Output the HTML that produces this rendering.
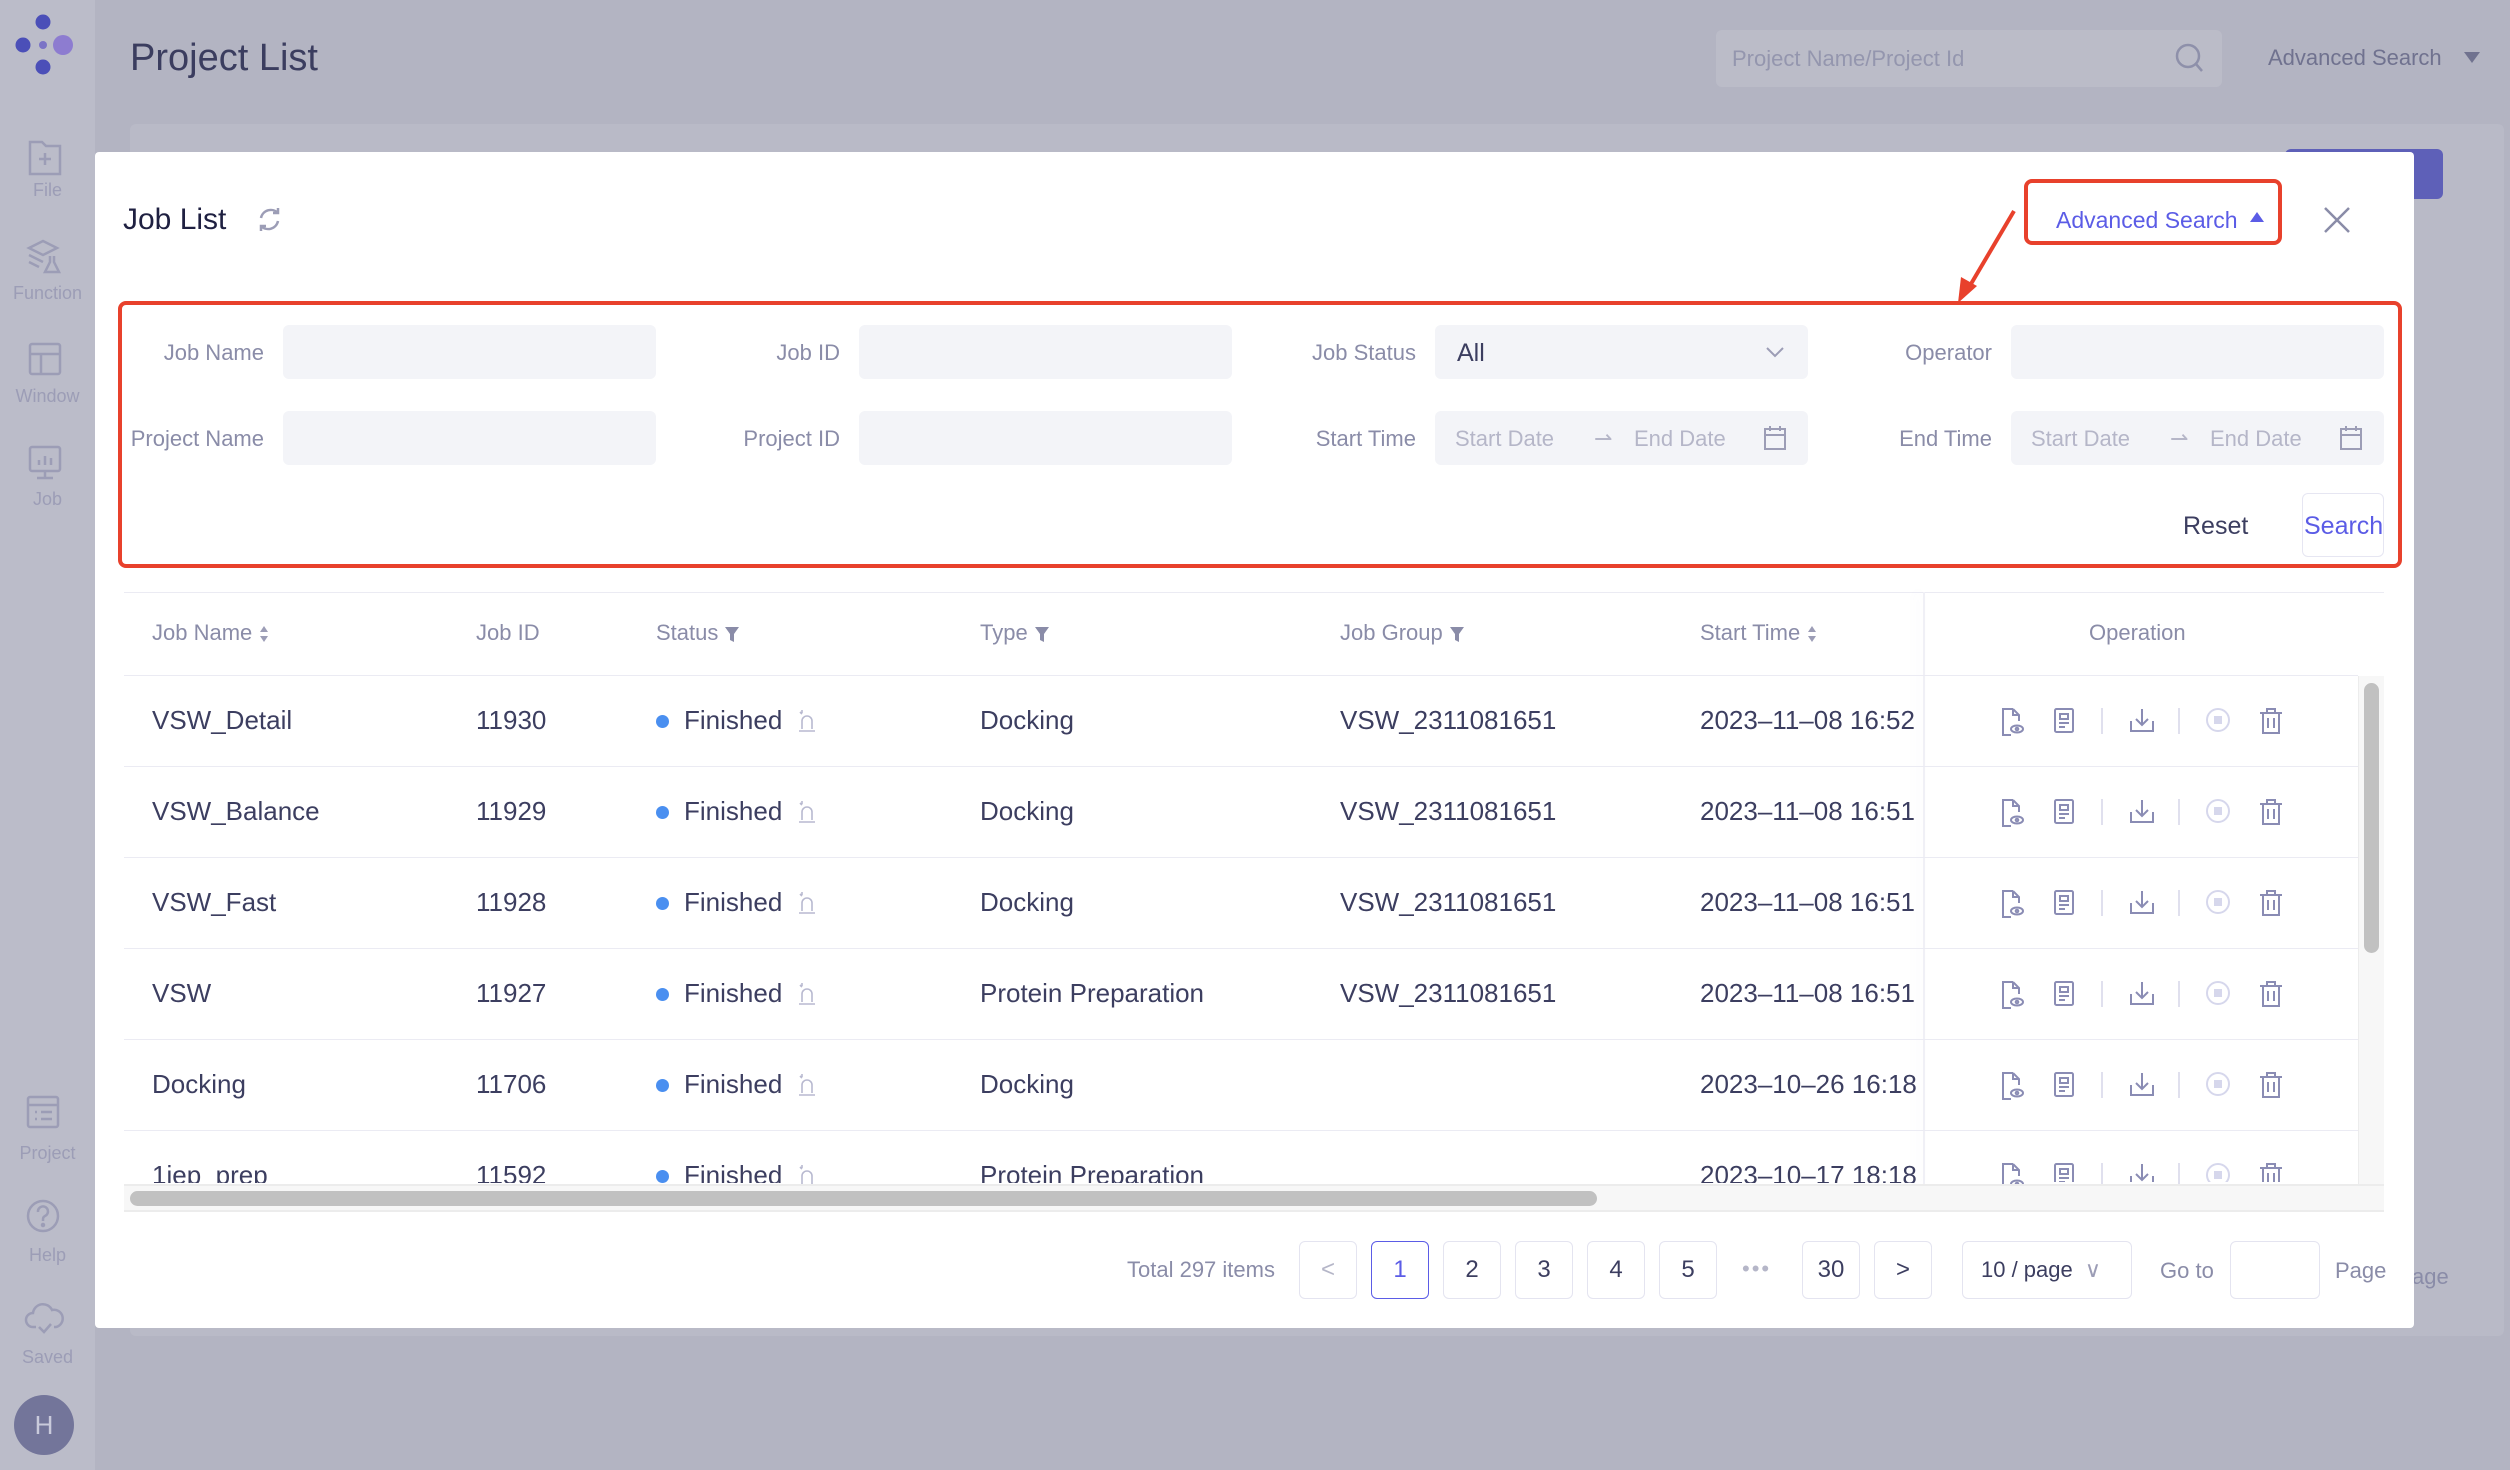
<!DOCTYPE html>
<html><head><meta charset="utf-8"><style>
*{margin:0;padding:0;box-sizing:border-box}
body{width:2510px;height:1470px;position:relative;overflow:hidden;background:#b3b4c2;font-family:"Liberation Sans",sans-serif}
.a{position:absolute}
.sb{left:0;top:0;width:95px;height:1470px;background:#bbbcc9}
.sl{width:95px;text-align:center;font-size:18px;color:#9c9db6}
.inp{background:#f3f4f8;border-radius:6px;height:54px}
.lbl{font-size:22px;color:#8a8ca8;text-align:right;width:200px}
.hd{font-size:22px;color:#8a8ca8;top:620px}
.c{font-size:26px;color:#3c3e60}
.pb{height:58px;border:1px solid #e4e4f0;border-radius:6px;top:1241px;font-size:24px;color:#3c3e60;text-align:center;line-height:56px;background:#fff}
.rl{height:1px;background:#ebebf3;left:124px;width:2234px}
.fl{display:inline-block;vertical-align:middle;margin-left:6px}
</style></head><body>
<div class="a sb"></div>
<svg class="a" style="left:0;top:0" width="95" height="90"><circle cx="43" cy="22" r="7.5" fill="#4b4fb8"/><circle cx="23" cy="45" r="7.5" fill="#4b4fb8"/><circle cx="43" cy="45" r="4" fill="#7a73c6"/><circle cx="63" cy="45" r="10" fill="#8d7cd0"/><circle cx="43" cy="67" r="7.5" fill="#4b4fb8"/></svg>
<svg class="a" style="left:28px;top:140px" width="36" height="36" fill="none" stroke="#9c9db6" stroke-width="2.5"><path d="M2 2h12l4 4h14v28H2z"/><path d="M17 13v12M11 19h12"/></svg>
<div class="a sl" style="top:180px">File</div>
<svg class="a" style="left:26px;top:238px" width="40" height="36" fill="none" stroke="#9c9db6" stroke-width="2.5"><path d="M3 10l14-7 14 7-14 7z"/><path d="M3 17l14 7M3 24l10 5"/><path d="M24 18v6l-5 10h14l-5-10v-6"/></svg>
<div class="a sl" style="top:283px">Function</div>
<svg class="a" style="left:28px;top:342px" width="36" height="36" fill="none" stroke="#9c9db6" stroke-width="2.5"><rect x="2" y="2" width="30" height="30" rx="2"/><path d="M2 12h30M13 12v20"/></svg>
<div class="a sl" style="top:386px">Window</div>
<svg class="a" style="left:28px;top:445px" width="36" height="36" fill="none" stroke="#9c9db6" stroke-width="2.5"><rect x="2" y="2" width="30" height="24" rx="2"/><path d="M17 26v6M9 33h16M11 20v-5M17 20v-9M23 20v-7"/></svg>
<div class="a sl" style="top:489px">Job</div>
<svg class="a" style="left:26px;top:1095px" width="40" height="36" fill="none" stroke="#9c9db6" stroke-width="2.5"><rect x="2" y="2" width="30" height="30" rx="2"/><path d="M2 10h30M9 17h2M15 17h11M9 24h2M15 24h11"/></svg>
<div class="a sl" style="top:1143px">Project</div>
<svg class="a" style="left:26px;top:1198px" width="40" height="40" fill="none" stroke="#9c9db6" stroke-width="2.5"><circle cx="17" cy="18" r="15"/><path d="M12 14a5 5 0 1 1 7 4c-2 1-2 2-2 5"/><circle cx="17" cy="27" r="1" fill="#9c9db6"/></svg>
<div class="a sl" style="top:1245px">Help</div>
<svg class="a" style="left:24px;top:1301px" width="44" height="36" fill="none" stroke="#9c9db6" stroke-width="2.5"><path d="M12 26H9a7 7 0 0 1 0-14 10 10 0 0 1 19-3 8 8 0 0 1 4 17h-2"/><path d="M15 26l5 5 7-8"/></svg>
<div class="a sl" style="top:1347px">Saved</div>
<div class="a" style="left:14px;top:1395px;width:60px;height:60px;border-radius:50%;background:#73759a;color:#c9cadb;font-size:26px;text-align:center;line-height:60px">H</div>
<div class="a" style="left:130px;top:37px;font-size:38px;color:#3b3d5f">Project List</div>
<div class="a" style="left:1716px;top:30px;width:506px;height:57px;background:#bbbcc8;border-radius:6px"></div>
<div class="a" style="left:1732px;top:46px;font-size:22px;color:#9496ae">Project Name/Project Id</div>
<svg class="a" style="left:2174px;top:42px" width="32" height="34" fill="none" stroke="#8e90aa" stroke-width="2.5"><circle cx="14" cy="14" r="11"/><path d="M22 22l6 7"/></svg>
<div class="a" style="left:2268px;top:45px;font-size:22px;color:#70728f">Advanced Search</div>
<div class="a" style="left:2464px;top:52px;width:0;height:0;border-left:8px solid transparent;border-right:8px solid transparent;border-top:11px solid #70728f"></div>
<div class="a" style="left:130px;top:124px;width:2374px;height:1212px;background:#b9bac7;border-radius:6px"></div>
<div class="a" style="left:2285px;top:149px;width:158px;height:50px;background:#5e60b8;border-radius:6px"></div>
<div class="a" style="left:2412px;top:1264px;font-size:22px;color:#8a8ca8">age</div>
<div class="a" style="left:95px;top:152px;width:2319px;height:1176px;background:#fff;border-radius:4px"></div>
<div class="a" style="left:123px;top:203px;font-size:30px;color:#1f2041">Job List</div>
<svg class="a" style="left:256px;top:205px" width="28" height="30" fill="none" stroke="#9c9db6" stroke-width="2.5"><path d="M22 8a10 10 0 0 0-17 5M5 21a10 10 0 0 0 17-5"/><path d="M22 3v5h-5M5 26v-5h5"/></svg>
<div class="a" style="left:2024px;top:179px;width:258px;height:66px;border:4px solid #e8412c;border-radius:8px"></div>
<div class="a" style="left:2056px;top:207px;font-size:23px;color:#5b5ce6">Advanced Search</div>
<div class="a" style="left:2250px;top:212px;width:0;height:0;border-left:7px solid transparent;border-right:7px solid transparent;border-bottom:10px solid #5b5ce6"></div>
<svg class="a" style="left:2322px;top:205px" width="30" height="30" stroke="#8a8ca8" stroke-width="2.5"><path d="M3 3l24 24M27 3L3 27"/></svg>
<svg class="a" style="left:1950px;top:205px" width="70" height="100"><path d="M64 6L18 84" stroke="#e8412c" stroke-width="4"/><path d="M8 98l3-26 16 9z" fill="#e8412c"/></svg>
<div class="a" style="left:118px;top:301px;width:2284px;height:267px;border:4px solid #e8412c;border-radius:8px"></div>
<div class="a lbl" style="left:64px;top:340px">Job Name</div>
<div class="a inp" style="left:283px;top:325px;width:373px"></div>
<div class="a lbl" style="left:640px;top:340px">Job ID</div>
<div class="a inp" style="left:859px;top:325px;width:373px"></div>
<div class="a lbl" style="left:1216px;top:340px">Job Status</div>
<div class="a inp" style="left:1435px;top:325px;width:373px"></div>
<div class="a" style="left:1457px;top:339px;font-size:25px;color:#3c3e60">All</div>
<svg class="a" style="left:1765px;top:345px" width="20" height="14" fill="none" stroke="#9c9db6" stroke-width="2"><path d="M2 3l8 8 8-8"/></svg>
<div class="a lbl" style="left:1792px;top:340px">Operator</div>
<div class="a inp" style="left:2011px;top:325px;width:373px"></div>
<div class="a lbl" style="left:64px;top:426px">Project Name</div>
<div class="a inp" style="left:283px;top:411px;width:373px"></div>
<div class="a lbl" style="left:640px;top:426px">Project ID</div>
<div class="a inp" style="left:859px;top:411px;width:373px"></div>
<div class="a lbl" style="left:1216px;top:426px">Start Time</div>
<div class="a inp" style="left:1435px;top:411px;width:373px"></div>
<div class="a lbl" style="left:1792px;top:426px">End Time</div>
<div class="a inp" style="left:2011px;top:411px;width:373px"></div>
<div class="a" style="left:1455px;top:426px;font-size:22px;color:#b5b6c8">Start Date</div>
<div class="a" style="left:1594px;top:426px;font-size:22px;color:#b5b6c8">⇀</div>
<div class="a" style="left:1634px;top:426px;font-size:22px;color:#b5b6c8">End Date</div>
<div class="a" style="left:2031px;top:426px;font-size:22px;color:#b5b6c8">Start Date</div>
<div class="a" style="left:2170px;top:426px;font-size:22px;color:#b5b6c8">⇀</div>
<div class="a" style="left:2210px;top:426px;font-size:22px;color:#b5b6c8">End Date</div>
<svg class="a" style="left:1763px;top:424px" width="24" height="28" fill="none" stroke="#9c9db6" stroke-width="2"><rect x="2" y="5" width="20" height="20"/><path d="M2 11h20M7 2v5M17 2v5"/></svg>
<svg class="a" style="left:2339px;top:424px" width="24" height="28" fill="none" stroke="#9c9db6" stroke-width="2"><rect x="2" y="5" width="20" height="20"/><path d="M2 11h20M7 2v5M17 2v5"/></svg>
<div class="a" style="left:2183px;top:512px;font-size:25px;color:#3c3e60">Reset</div>
<div class="a" style="left:2302px;top:493px;width:82px;height:64px;border:1px solid #e6e6f2;border-radius:6px"></div>
<div class="a" style="left:2304px;top:512px;font-size:25px;color:#5b5ce6">Search</div>
<div class="a rl" style="top:592px;width:2260px"></div>
<div class="a" style="left:1923px;top:592px;width:2px;height:592px;background:#f0f0f6;box-shadow:-6px 0 10px rgba(120,120,180,0.08)"></div>
<div class="a hd" style="left:152px">Job Name<svg class="fl" width="12" height="18"><path d="M6 1l4 6H2zM6 17l4-6H2z" fill="#9c9db6"/></svg></div>
<div class="a hd" style="left:476px">Job ID</div>
<div class="a hd" style="left:656px">Status<svg class="fl" width="16" height="18"><path d="M1 2h14l-5 7v8l-4-2V9z" fill="#8a8ca8"/></svg></div>
<div class="a hd" style="left:980px">Type<svg class="fl" width="16" height="18"><path d="M1 2h14l-5 7v8l-4-2V9z" fill="#8a8ca8"/></svg></div>
<div class="a hd" style="left:1340px">Job Group<svg class="fl" width="16" height="18"><path d="M1 2h14l-5 7v8l-4-2V9z" fill="#8a8ca8"/></svg></div>
<div class="a hd" style="left:1700px">Start Time<svg class="fl" width="12" height="18"><path d="M6 1l4 6H2zM6 17l4-6H2z" fill="#9c9db6"/></svg></div>
<div class="a hd" style="left:2089px">Operation</div>
<div class="a rl" style="top:675px"></div>
<div class="a rl" style="top:766px"></div>
<div class="a rl" style="top:857px"></div>
<div class="a rl" style="top:948px"></div>
<div class="a rl" style="top:1039px"></div>
<div class="a rl" style="top:1130px"></div>
<div id="rows"></div>
<div class="a" style="left:124px;top:1184px;width:2260px;height:28px;background:#f7f7f7;border-top:2px solid #ececec;border-bottom:2px solid #ececec"></div>
<div class="a" style="left:130px;top:1191px;width:1467px;height:15px;background:#c1c1c1;border-radius:8px"></div>
<div class="a" style="left:2358px;top:676px;width:26px;height:508px;background:#f7f7f7;border-left:1px solid #ececec"></div>
<div class="a" style="left:2364px;top:683px;width:15px;height:270px;background:#c1c1c1;border-radius:8px"></div>
<div class="a" style="left:1127px;top:1257px;font-size:22px;color:#8a8ca8">Total 297 items</div>
<div class="a pb" style="left:1299px;width:58px;color:#b5b6c8">&lt;</div>
<div class="a pb" style="left:1371px;width:58px;border-color:#5b5ce6;color:#5b5ce6">1</div>
<div class="a pb" style="left:1443px;width:58px">2</div>
<div class="a pb" style="left:1515px;width:58px">3</div>
<div class="a pb" style="left:1587px;width:58px">4</div>
<div class="a pb" style="left:1659px;width:58px">5</div>
<div class="a" style="left:1742px;top:1256px;font-size:22px;color:#b5b6c8;letter-spacing:2px">•••</div>
<div class="a pb" style="left:1802px;width:58px">30</div>
<div class="a pb" style="left:1874px;width:58px">&gt;</div>
<div class="a pb" style="left:1962px;width:170px;font-size:22px;text-align:left;padding-left:18px">10 / page <span style="color:#9c9db6;margin-left:6px">∨</span></div>
<div class="a" style="left:2160px;top:1258px;font-size:22px;color:#8a8ca8">Go to</div>
<div class="a pb" style="left:2230px;width:90px"></div>
<div class="a" style="left:2335px;top:1258px;font-size:22px;color:#8a8ca8">Page</div>
<script>
var d=[["VSW_Detail","11930","Docking","VSW_2311081651","2023-11-08 16:52"],["VSW_Balance","11929","Docking","VSW_2311081651","2023-11-08 16:51"],["VSW_Fast","11928","Docking","VSW_2311081651","2023-11-08 16:51"],["VSW","11927","Protein Preparation","VSW_2311081651","2023-11-08 16:51"],["Docking","11706","Docking","","2023-10-26 16:18"],["1iep_prep","11592","Protein Preparation","","2023-10-17 18:18"]];
var h="";
var ic='<path d="M14 2H4v26h8M14 2l6 6v6M14 2v6h6" /><ellipse cx="18" cy="22" rx="6" ry="3.5"/><circle cx="18" cy="22" r="1.3"/>';
d.forEach(function(r,i){var cy=721+91*i;var y=cy-16;var clip=i==5?'clip-path:inset(0 0 8px 0);':'';
h+='<div class="a c" style="left:152px;top:'+y+'px;'+clip+'">'+r[0]+'</div>';
h+='<div class="a c" style="left:476px;top:'+y+'px;'+clip+'">'+r[1]+'</div>';
h+='<div class="a" style="left:656px;top:'+(cy-6)+'px;width:13px;height:13px;border-radius:50%;background:#4a8ff0"></div>';
h+='<div class="a c" style="left:684px;top:'+y+'px;'+clip+'">Finished</div>';
h+='<svg class="a" style="left:796px;top:'+(cy-12)+'px" width="22" height="24" fill="none" stroke="#b8b9d0" stroke-width="1.6"><path d="M6 20v-8a5 5 0 0 1 10 0v8M3 22h16M4 3l2 2M6 1v3"/></svg>';
h+='<div class="a c" style="left:980px;top:'+y+'px;'+clip+'">'+r[2]+'</div>';
h+='<div class="a c" style="left:1340px;top:'+y+'px;'+clip+'">'+r[3]+'</div>';
h+='<div class="a c" style="left:1700px;top:'+y+'px;'+clip+'">'+r[4].replace(/-/g,"–")+'</div>';
var o=cy-14;
h+='<svg class="a" style="left:1999px;top:'+o+'px;'+clip+'" width="26" height="30" fill="none" stroke="#8a8cb4" stroke-width="2">'+ic+'</svg>';
h+='<svg class="a" style="left:2053px;top:'+o+'px;'+clip+'" width="22" height="28" fill="none" stroke="#8a8cb4" stroke-width="2"><rect x="2" y="2" width="18" height="23" rx="1.5"/><rect x="7" y="7" width="8" height="5"/><path d="M6 16h10M6 20h6"/></svg>';
h+='<div class="a" style="left:2101px;top:'+(cy-13)+'px;width:2px;height:26px;background:#e0e0ee"></div>';
h+='<svg class="a" style="left:2129px;top:'+o+'px;'+clip+'" width="26" height="28" fill="none" stroke="#8a8cb4" stroke-width="2"><path d="M2 14v10h22V14M13 2v16M7 12l6 6 6-6"/></svg>';
h+='<div class="a" style="left:2178px;top:'+(cy-13)+'px;width:2px;height:26px;background:#e0e0ee"></div>';
h+='<svg class="a" style="left:2205px;top:'+o+'px;'+clip+'" width="26" height="28"><circle cx="13" cy="13" r="11" fill="none" stroke="#d6d7ec" stroke-width="2"/><rect x="9" y="9" width="8" height="8" fill="#d6d7ec"/></svg>';
h+='<svg class="a" style="left:2258px;top:'+o+'px;'+clip+'" width="26" height="28" fill="none" stroke="#8a8cb4" stroke-width="2"><path d="M2 6h22M9 6V2h8v4M5 6v20h16V6M10 11v10M16 11v10"/></svg>';
});
document.getElementById("rows").outerHTML=h;
</script>
</body></html>
